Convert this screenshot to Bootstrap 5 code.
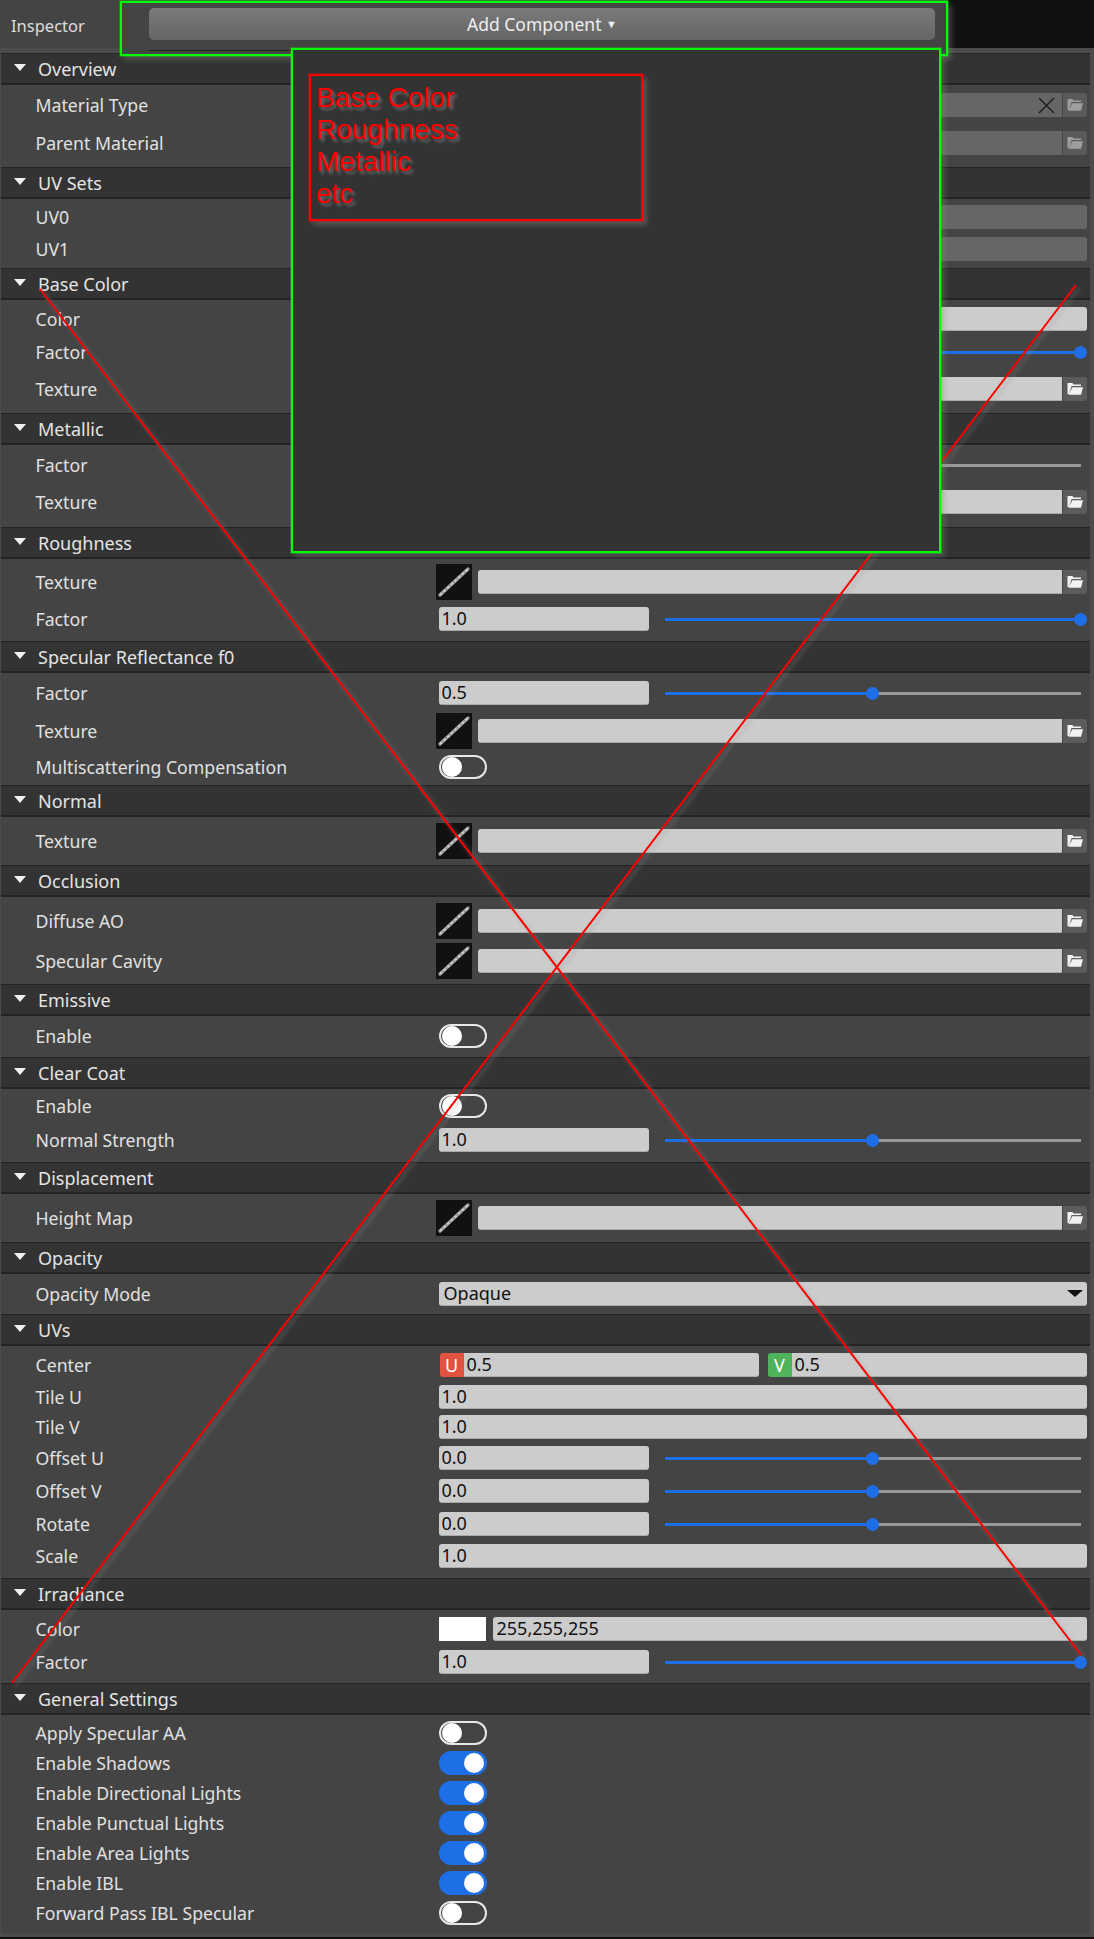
<!DOCTYPE html>
<html lang="en"><head><meta charset="utf-8"><title>Inspector</title>
<link rel="stylesheet" href="https://cdn.jsdelivr.net/npm/bootstrap@5.3.0/dist/css/bootstrap.min.css">
<style>
html,body{margin:0;background:#111;}
body{font-family:"Noto Sans",sans-serif;font-size:16px;line-height:1.2;color:#e0e0e0;}
.app{position:relative;width:1094px;height:1939px;overflow:hidden;background:#111;}
.tabbar{height:48px;background:#111;padding-top:3px;}
.tabbar-strip{height:3px;background:#454545;margin-top:-3px;}
.tab-main{width:948px;height:48px;margin-top:-3px;background:#444;padding:3px 0 0 11px;font-size:16.5px;line-height:45px;color:#ddd;}
.frame{background:#4b4b4b;padding:5px 4px 4px 1px;height:1889px;}
.sec-h{height:32px;background:#333;border-top:1px solid #232323;border-bottom:2px solid #232323;color:#e4e4e4;font-size:18px;}
.sec-h .tri{width:0;height:0;border-left:6px solid transparent;border-right:6px solid transparent;border-top:7px solid #f0f0f0;margin:0 12px 2px 13px;}
.sec-h .ttl{padding-top:2px;}
.sec-b{background:#444;padding-left:34.5px;padding-right:3.5px;}
.lbl{width:403px;flex:none;font-size:17.7px;color:#e0e0e0;white-space:nowrap;padding-top:1px;}
.rh26{height:26px}.rh28{height:28px}.rh32{height:32px}.rh34{height:34px}.rh36{height:36px}.rh38{height:38px}.rh40{height:40px}.rh46{height:46px}.rh48{height:48px}
.gp1{padding-bottom:1px}.gp4{padding-bottom:4px}.gp5{padding-bottom:5px}.gp6{padding-bottom:6px}.gp7{padding-bottom:7px}.gp8{padding-bottom:8px}
.fld.form-control{height:24px;min-height:24px;padding:0 3px;border:0;border-bottom:1px solid #aaa;border-radius:3px;background:#ccc;color:#111;font-size:18px;line-height:23px;flex:1 1 0;min-width:0;}
.fld.off{background:#666;border-color:#666;position:relative;}
.fld.sq{border-radius:3px 0 0 3px;}
.fld.num{flex:none;width:210px;}
.thumb{width:36px;height:36px;background:#111;flex:none;margin:0 6px 0 -3px;}
.thumb svg,.fold svg{display:block;}
.fold{width:24px;height:24px;background:#5c5c5c;border-radius:0 3px 3px 0;margin-left:1px;flex:none;}
.fold.off svg{opacity:.45;}
.fold.off{background:#5a5a5a;}
.xmark{position:absolute;right:7px;top:4px;}
.slide{margin-left:16px;width:416px;height:3px;background:#999;position:relative;flex:none;}
.slide-fill{height:3px;background:#1e6fe6;position:relative;}
.knob{position:absolute;right:-6px;top:-5px;width:13px;height:13px;background:#1e6fe6;border-radius:50%;}
.tog{width:48px;height:24px;border-radius:12px;border:2px solid #e8e8e8;flex:none;padding:0 2px;}
.tog i{display:block;width:20px;height:20px;border-radius:50%;background:#fff;margin-left:-1px;}
.tog.on{background:#1e6fe6;border-color:#1e6fe6;justify-content:flex-end;}
.tog.on i{margin:0 -1px 0 0;}
.uvtag{width:24px;height:24px;color:#fff;font-size:18px;flex:none;text-align:center;line-height:24px;border-radius:3px 0 0 3px;}
.uvtag.u{background:#e25241;margin-left:1px;}
.uvtag.v{background:#4fb35c;margin-left:9px;}
.fld.joined{border-radius:0 3px 3px 0;}
.swatch{width:47px;height:24px;background:#fff;flex:none;margin-right:7px;}
.swatch + .fld.form-control{padding-left:4px;}
.gen{display:flex;flex-direction:column;gap:6px;padding-top:6px;}
.gen>div{height:24px;}
.caret-b{width:0;height:0;border-left:8px solid transparent;border-right:8px solid transparent;border-top:7px solid #111;margin-right:1px;}
.fld.form-control.selectish{display:flex;align-items:center;justify-content:space-between;padding-left:5px;}
.top-box{position:absolute;left:120px;top:1px;width:828px;height:55px;background:#444;border:2px solid #0f0;box-shadow:0 0 0 1px rgba(0,255,0,.3),4px 4px 5px rgba(140,140,140,.35);z-index:3;padding:5px 11px 0 27px;}
.top-rule{height:1px;background:#232323;margin-top:10px;}
.add-btn.btn{display:block;width:100%;height:32px;padding:0;border:0;border-radius:5px;background:linear-gradient(#7a7a7a,#656565);color:#eee;font-size:17.5px;line-height:30px;}
.add-btn small{font-size:11px;vertical-align:3px;}
.big-box{position:absolute;left:291px;top:48px;width:650px;height:505px;background:#333;border:2px solid #0f0;box-shadow:0 0 0 1px rgba(0,255,0,.3),4px 4px 5px rgba(140,140,140,.35);z-index:4;}
.red-box{position:absolute;left:16px;top:24px;width:334px;height:147px;border:2px solid #f00;box-shadow:0 0 0 1px rgba(255,0,0,.3),4px 4px 5px rgba(140,140,140,.4);padding:6px 5px;font-family:"Liberation Sans",sans-serif;font-size:28px;line-height:32px;color:#f00;text-shadow:3px 3px 3px rgba(150,150,150,.55);}
.lines{position:absolute;left:0;top:0;width:1094px;height:1939px;z-index:2;pointer-events:none;filter:drop-shadow(3px 3px 2px rgba(150,150,150,.45));}
</style></head><body>
<svg width="0" height="0" class="d-block position-absolute"><defs>
<symbol id="folder" viewBox="0 0 24 24"><path d="M4.5 6h5l1 1.4H18v1.6H8.6L6 17H4.5z" fill="#f2f2f2"/><path d="M9.4 10.2H20l-2 7.6H5.4z" fill="#f2f2f2"/></symbol>
<symbol id="nomap" viewBox="0 0 36 36"><line x1="4" y1="31" x2="32" y2="5" stroke="#999" stroke-width="3.4" stroke-linecap="round"/><line x1="4" y1="31" x2="32" y2="5" stroke="#ccc" stroke-width="2" stroke-dasharray="2.5 2.5"/></symbol>
</defs></svg>
<div class="app">
<div class="tabbar-strip"></div>
<div class="tabbar d-flex"><div class="tab-main">Inspector</div></div>
<div class="frame">

<div class="sec-h d-flex align-items-center"><span class="tri"></span><span class="ttl">Overview</span></div>
<div class="sec-b gp6">
<div class="d-flex align-items-center rh40"><div class="lbl">Material Type</div><div class="form-control fld off sq"><svg class="xmark" width="17" height="17" viewBox="0 0 17 17"><path d="M1 1l15 15M16 1L1 16" stroke="#222" stroke-width="1.6"/></svg></div><div class="fold off"><svg width="24" height="24"><use href="#folder"/></svg></div></div>
<div class="d-flex align-items-center rh36"><div class="lbl">Parent Material</div><div class="form-control fld off sq"></div><div class="fold off"><svg width="24" height="24"><use href="#folder"/></svg></div></div>
</div>

<div class="sec-h d-flex align-items-center"><span class="tri"></span><span class="ttl">UV Sets</span></div>
<div class="sec-b gp5">
<div class="d-flex align-items-center rh36"><div class="lbl">UV0</div><div class="form-control fld off"></div></div>
<div class="d-flex align-items-center rh28"><div class="lbl">UV1</div><div class="form-control fld off"></div></div>
</div>

<div class="sec-h d-flex align-items-center"><span class="tri"></span><span class="ttl">Base Color</span></div>
<div class="sec-b gp1">
<div class="d-flex align-items-center rh38"><div class="lbl">Color</div><div class="form-control fld"></div></div>
<div class="d-flex align-items-center rh28"><div class="lbl">Factor</div><div class="form-control fld num">1.0</div><div class="slide"><div class="slide-fill" style="width:100%"><span class="knob"></span></div></div></div>
<div class="d-flex align-items-center rh46"><div class="lbl">Texture</div><div class="thumb"><svg width="36" height="36"><use href="#nomap"/></svg></div><div class="form-control fld sq"></div><div class="fold"><svg width="24" height="24"><use href="#folder"/></svg></div></div>
</div>

<div class="sec-h d-flex align-items-center"><span class="tri"></span><span class="ttl">Metallic</span></div>
<div class="sec-b gp8">
<div class="d-flex align-items-center rh40"><div class="lbl">Factor</div><div class="form-control fld num">0.0</div><div class="slide"><div class="slide-fill" style="width:0%"><span class="knob"></span></div></div></div>
<div class="d-flex align-items-center rh34"><div class="lbl">Texture</div><div class="thumb"><svg width="36" height="36"><use href="#nomap"/></svg></div><div class="form-control fld sq"></div><div class="fold"><svg width="24" height="24"><use href="#folder"/></svg></div></div>
</div>

<div class="sec-h d-flex align-items-center"><span class="tri"></span><span class="ttl">Roughness</span></div>
<div class="sec-b gp8">
<div class="d-flex align-items-center rh46"><div class="lbl">Texture</div><div class="thumb"><svg width="36" height="36"><use href="#nomap"/></svg></div><div class="form-control fld sq"></div><div class="fold"><svg width="24" height="24"><use href="#folder"/></svg></div></div>
<div class="d-flex align-items-center rh28"><div class="lbl">Factor</div><div class="form-control fld num">1.0</div><div class="slide"><div class="slide-fill" style="width:100%"><span class="knob"></span></div></div></div>
</div>

<div class="sec-h d-flex align-items-center"><span class="tri"></span><span class="ttl">Specular Reflectance f0</span></div>
<div class="sec-b">
<div class="d-flex align-items-center rh40"><div class="lbl">Factor</div><div class="form-control fld num">0.5</div><div class="slide"><div class="slide-fill" style="width:50%"><span class="knob"></span></div></div></div>
<div class="d-flex align-items-center rh36"><div class="lbl">Texture</div><div class="thumb"><svg width="36" height="36"><use href="#nomap"/></svg></div><div class="form-control fld sq"></div><div class="fold"><svg width="24" height="24"><use href="#folder"/></svg></div></div>
<div class="d-flex align-items-center rh36"><div class="lbl">Multiscattering Compensation</div><div class="tog d-flex align-items-center"><i></i></div></div>
</div>

<div class="sec-h d-flex align-items-center"><span class="tri"></span><span class="ttl">Normal</span></div>
<div class="sec-b">
<div class="d-flex align-items-center rh48"><div class="lbl">Texture</div><div class="thumb"><svg width="36" height="36"><use href="#nomap"/></svg></div><div class="form-control fld sq"></div><div class="fold"><svg width="24" height="24"><use href="#folder"/></svg></div></div>
</div>

<div class="sec-h d-flex align-items-center"><span class="tri"></span><span class="ttl">Occlusion</span></div>
<div class="sec-b gp7">
<div class="d-flex align-items-center rh48"><div class="lbl">Diffuse AO</div><div class="thumb"><svg width="36" height="36"><use href="#nomap"/></svg></div><div class="form-control fld sq"></div><div class="fold"><svg width="24" height="24"><use href="#folder"/></svg></div></div>
<div class="d-flex align-items-center rh32"><div class="lbl">Specular Cavity</div><div class="thumb"><svg width="36" height="36"><use href="#nomap"/></svg></div><div class="form-control fld sq"></div><div class="fold"><svg width="24" height="24"><use href="#folder"/></svg></div></div>
</div>

<div class="sec-h d-flex align-items-center"><span class="tri"></span><span class="ttl">Emissive</span></div>
<div class="sec-b gp1">
<div class="d-flex align-items-center rh40"><div class="lbl">Enable</div><div class="tog d-flex align-items-center"><i></i></div></div>
</div>

<div class="sec-h d-flex align-items-center"><span class="tri"></span><span class="ttl">Clear Coat</span></div>
<div class="sec-b gp5">
<div class="d-flex align-items-center rh34"><div class="lbl">Enable</div><div class="tog d-flex align-items-center"><i></i></div></div>
<div class="d-flex align-items-center rh34"><div class="lbl">Normal Strength</div><div class="form-control fld num">1.0</div><div class="slide"><div class="slide-fill" style="width:50%"><span class="knob"></span></div></div></div>
</div>

<div class="sec-h d-flex align-items-center"><span class="tri"></span><span class="ttl">Displacement</span></div>
<div class="sec-b">
<div class="d-flex align-items-center rh48"><div class="lbl">Height Map</div><div class="thumb"><svg width="36" height="36"><use href="#nomap"/></svg></div><div class="form-control fld sq"></div><div class="fold"><svg width="24" height="24"><use href="#folder"/></svg></div></div>
</div>

<div class="sec-h d-flex align-items-center"><span class="tri"></span><span class="ttl">Opacity</span></div>
<div class="sec-b">
<div class="d-flex align-items-center rh40"><div class="lbl">Opacity Mode</div><div class="form-control fld selectish"><span>Opaque</span><span class="caret-b"></span></div></div>
</div>

<div class="sec-h d-flex align-items-center"><span class="tri"></span><span class="ttl">UVs</span></div>
<div class="sec-b gp4">
<div class="d-flex align-items-center rh38"><div class="lbl">Center</div><div class="uvtag u">U</div><div class="form-control fld joined">0.5</div><div class="uvtag v">V</div><div class="form-control fld joined">0.5</div></div>
<div class="d-flex align-items-center rh26"><div class="lbl">Tile U</div><div class="form-control fld">1.0</div></div>
<div class="d-flex align-items-center rh34"><div class="lbl">Tile V</div><div class="form-control fld">1.0</div></div>
<div class="d-flex align-items-center rh28"><div class="lbl">Offset U</div><div class="form-control fld num">0.0</div><div class="slide"><div class="slide-fill" style="width:50%"><span class="knob"></span></div></div></div>
<div class="d-flex align-items-center rh38"><div class="lbl">Offset V</div><div class="form-control fld num">0.0</div><div class="slide"><div class="slide-fill" style="width:50%"><span class="knob"></span></div></div></div>
<div class="d-flex align-items-center rh28"><div class="lbl">Rotate</div><div class="form-control fld num">0.0</div><div class="slide"><div class="slide-fill" style="width:50%"><span class="knob"></span></div></div></div>
<div class="d-flex align-items-center rh36"><div class="lbl">Scale</div><div class="form-control fld">1.0</div></div>
</div>

<div class="sec-h d-flex align-items-center"><span class="tri"></span><span class="ttl">Irradiance</span></div>
<div class="sec-b gp7">
<div class="d-flex align-items-center rh38"><div class="lbl">Color</div><div class="swatch"></div><div class="form-control fld">255,255,255</div></div>
<div class="d-flex align-items-center rh28"><div class="lbl">Factor</div><div class="form-control fld num">1.0</div><div class="slide"><div class="slide-fill" style="width:100%"><span class="knob"></span></div></div></div>
</div>

<div class="sec-h d-flex align-items-center"><span class="tri"></span><span class="ttl">General Settings</span></div>
<div class="sec-b gen gp8">
<div class="d-flex align-items-center"><div class="lbl">Apply Specular AA</div><div class="tog d-flex align-items-center"><i></i></div></div>
<div class="d-flex align-items-center"><div class="lbl">Enable Shadows</div><div class="tog on d-flex align-items-center"><i></i></div></div>
<div class="d-flex align-items-center"><div class="lbl">Enable Directional Lights</div><div class="tog on d-flex align-items-center"><i></i></div></div>
<div class="d-flex align-items-center"><div class="lbl">Enable Punctual Lights</div><div class="tog on d-flex align-items-center"><i></i></div></div>
<div class="d-flex align-items-center"><div class="lbl">Enable Area Lights</div><div class="tog on d-flex align-items-center"><i></i></div></div>
<div class="d-flex align-items-center"><div class="lbl">Enable IBL</div><div class="tog on d-flex align-items-center"><i></i></div></div>
<div class="d-flex align-items-center"><div class="lbl">Forward Pass IBL Specular</div><div class="tog d-flex align-items-center"><i></i></div></div>
</div>

</div>

<svg class="lines" viewBox="0 0 1094 1939"><line x1="40" y1="289" x2="1081" y2="1655" stroke="#f00" stroke-width="2"/><line x1="1076" y1="285" x2="12" y2="1683" stroke="#f00" stroke-width="2"/></svg>
<div class="top-box"><button type="button" class="btn add-btn">Add Component <small>▼</small></button><div class="top-rule"></div></div>
<div class="big-box"><div class="red-box">Base Color<br>Roughness<br>Metallic<br>etc</div></div>
</div>
<script src="https://cdn.jsdelivr.net/npm/bootstrap@5.3.0/dist/js/bootstrap.bundle.min.js"></script>
</body></html>
